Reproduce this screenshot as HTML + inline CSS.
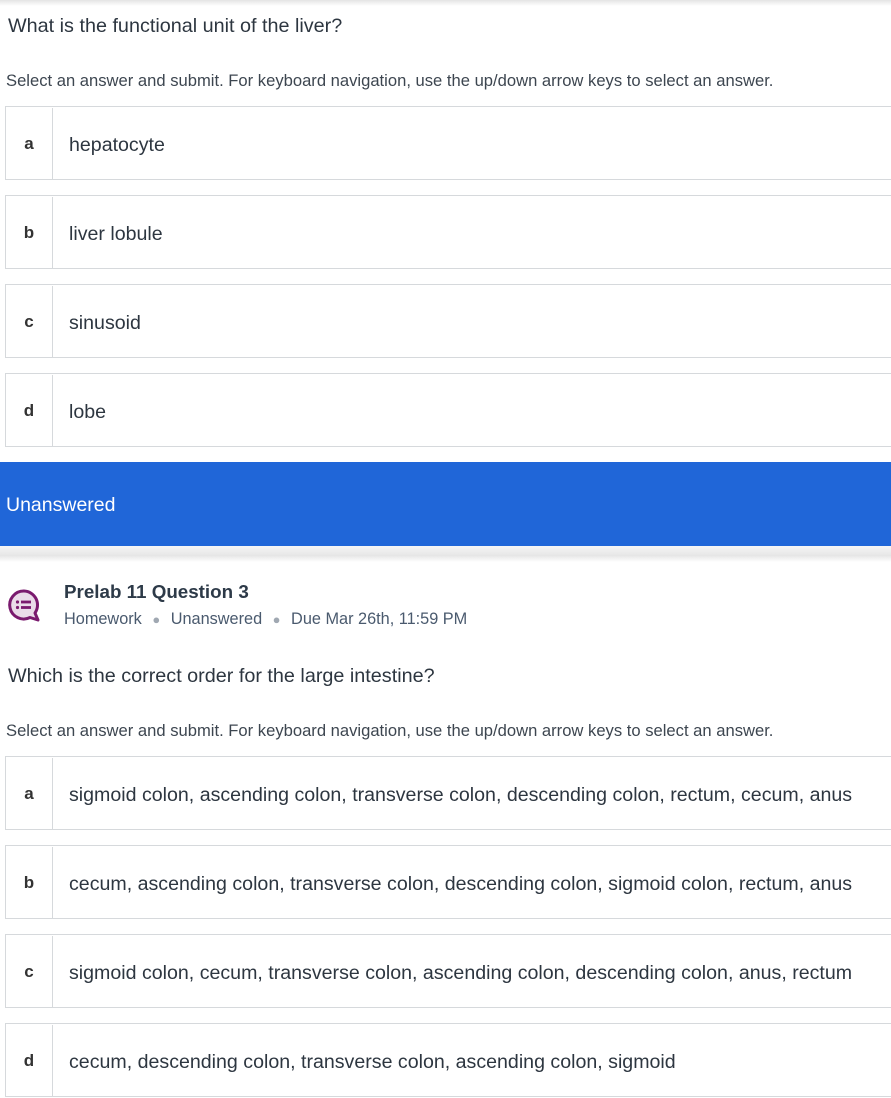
<!DOCTYPE html>
<html><head><style>
body{margin:0;width:891px;height:1077px;overflow:hidden;background:#fff;font-family:"Liberation Sans",sans-serif;color:#333;position:relative}
.abs{position:absolute;white-space:nowrap}
.topsh{position:absolute;left:0;top:0;width:891px;height:6px;background:linear-gradient(#e4e4e4,#fff)}
.q{font-size:19.8px;color:#2d3640;left:8px}
.ins{font-size:16.6px;color:#3d4650;left:6px}
.opt{position:absolute;left:5px;width:900px;height:72px;border:1px solid #d6d9dc;box-sizing:content-box}
.opt .l{position:absolute;left:0;top:1px;width:46px;height:72px;border-right:1px solid #d6d9dc;text-align:center;line-height:72px;font-size:17px;font-weight:bold;color:#333}
.opt .t{position:absolute;left:63px;top:2px;line-height:72px;font-size:19.6px;color:#2d3640;white-space:nowrap}
.blue{position:absolute;left:0;top:462px;width:891px;height:84px;background:#2066d8}
.blue span{position:absolute;left:6px;top:32px;color:#fff;font-size:19.5px}
.sh2{position:absolute;left:0;top:546px;width:891px;height:16px;background:linear-gradient(#f6f6f6,#e6e6e6 60%,#fff)}
</style></head><body>
<div class="topsh"></div>
<div class="abs q" style="top:15px">What is the functional unit of the liver?</div>
<div class="abs ins" style="top:71px">Select an answer and submit. For keyboard navigation, use the up/down arrow keys to select an answer.</div>
<div class="opt" style="top:106px"><div class="l">a</div><div class="t">hepatocyte</div></div>
<div class="opt" style="top:195px"><div class="l">b</div><div class="t">liver lobule</div></div>
<div class="opt" style="top:284px"><div class="l">c</div><div class="t">sinusoid</div></div>
<div class="opt" style="top:373px"><div class="l">d</div><div class="t">lobe</div></div>
<div class="blue"><span>Unanswered</span></div>
<div class="sh2"></div>
<svg class="abs" style="left:6px;top:588px" width="36" height="36" viewBox="0 0 36 36">
<path d="M18 3 A14 14 0 1 0 24 29.5 L32 32 L29 25 A14 14 0 0 0 18 3Z" fill="#eadbe9" stroke="#7a1a6e" stroke-width="3" stroke-linejoin="round"/>
<circle cx="11.5" cy="14" r="1.6" fill="#7a1a6e"/><circle cx="11.5" cy="19.5" r="1.6" fill="#7a1a6e"/>
<rect x="15" y="12.6" width="10" height="2.8" fill="#7a1a6e"/><rect x="15" y="18.1" width="10" height="2.8" fill="#7a1a6e"/>
</svg>
<div class="abs" style="left:64px;top:581px;font-size:18.8px;font-weight:bold;color:#2d3a48">Prelab 11 Question 3</div>
<div class="abs" style="left:64px;top:610px;font-size:16.3px;color:#4a5a6e">Homework <span style="color:#a0a8b2;margin:0 6px;font-size:13px">●</span> Unanswered <span style="color:#a0a8b2;margin:0 6px;font-size:13px">●</span> Due Mar 26th, 11:59 PM</div>
<div class="abs q" style="top:665px">Which is the correct order for the large intestine?</div>
<div class="abs ins" style="top:721px">Select an answer and submit. For keyboard navigation, use the up/down arrow keys to select an answer.</div>
<div class="opt" style="top:756px"><div class="l">a</div><div class="t">sigmoid colon, ascending colon, transverse colon, descending colon, rectum, cecum, anus</div></div>
<div class="opt" style="top:845px"><div class="l">b</div><div class="t">cecum, ascending colon, transverse colon, descending colon, sigmoid colon, rectum, anus</div></div>
<div class="opt" style="top:934px"><div class="l">c</div><div class="t">sigmoid colon, cecum, transverse colon, ascending colon, descending colon, anus, rectum</div></div>
<div class="opt" style="top:1023px"><div class="l">d</div><div class="t">cecum, descending colon, transverse colon, ascending colon, sigmoid</div></div>
</body></html>
